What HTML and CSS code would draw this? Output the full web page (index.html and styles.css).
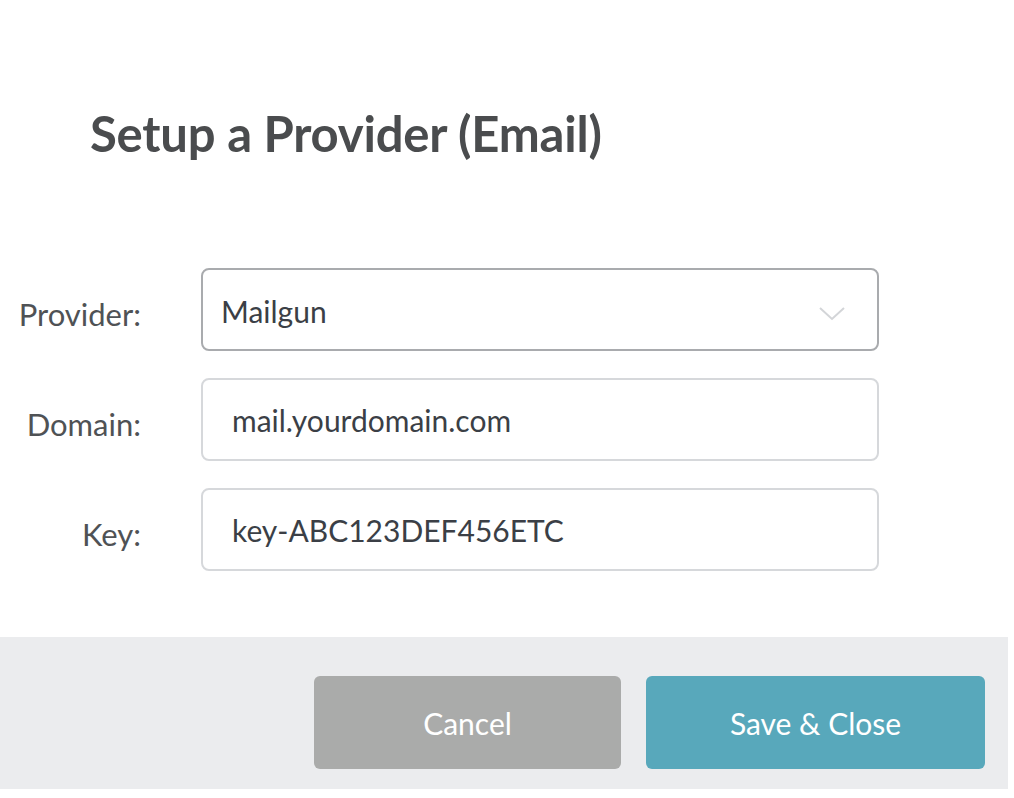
FILE: index.html
```html
<!DOCTYPE html>
<html lang="en">
  <head>
    <meta name="viewport" content="width=device-width" />
    <title>Setup a Provider (Email)</title>
    <link rel="stylesheet" href="styles.css">
  </head>
  <body>
    <main class="dialog">
      <h1 class="dialog-title">Setup a Provider (Email)</h1>
      <form class="provider-form">
        <label class="field-label" for="provider">Provider:</label>
        <div class="select-box" id="provider">
          <span class="select-value">Mailgun</span>
          <svg class="chevron" width="26" height="14" viewBox="0 0 26 14">
            <path d="M1 1 L13 12 L25 1" fill="none" stroke="#d3d5d8" stroke-width="2"/>
          </svg>
        </div>
        <label class="field-label" for="domain">Domain:</label>
        <input class="text-input" id="domain" type="text" value="mail.yourdomain.com">
        <label class="field-label" for="key">Key:</label>
        <input class="text-input" id="key" type="text" value="key-ABC123DEF456ETC">
      </form>
      <footer class="dialog-footer">
        <button class="btn btn-cancel" type="button">Cancel</button>
        <button class="btn btn-save" type="button">Save &amp; Close</button>
      </footer>
    </main>
  </body>
</html>
```

FILE: styles.css
```css
body {
  margin: 0;
  background: #fff;
  font-family: Lato, "Open Sans", sans-serif;
}

.dialog {
  width: 1008px;
  padding-top: 101px;
}

.dialog-title {
  margin: 0 0 0 90px;
  font-size: 49px;
  line-height: 64px;
  font-weight: 700;
  letter-spacing: -0.2px;
  color: #4a4c4e;
}

/* label column + input column */
.provider-form {
  display: grid;
  grid-template-columns: 141px 678px;
  column-gap: 60px;
  row-gap: 27px;
  align-items: center;
  margin-top: 103px;
}

.field-label {
  padding-top: 9px;
  text-align: right;
  font-size: 31px;
  color: #4f5255;
}

.select-box,
.text-input {
  box-sizing: border-box;
  height: 83px;
  border: 2px solid #d6d8db;
  border-radius: 8px;
  background: #fff;
  font-family: inherit;
  font-size: 30px;
  color: #3b3f46;
}

.select-box {
  display: flex;
  align-items: center;
  justify-content: space-between;
  padding: 0 32px 0 18px;
  border-color: #a9abae;
}

.select-value {
  margin-top: 3px;
}

.chevron {
  margin-top: 8px;
}

.text-input {
  width: 100%;
  padding: 0 29px;
  outline: none;
}

.dialog-footer {
  display: flex;
  justify-content: flex-end;
  gap: 25px;
  margin-top: 66px;
  padding: 39px 23px 20px 0;
  height: 152px;
  box-sizing: border-box;
  background: #ebecee;
}

.btn {
  height: 93px;
  border: none;
  border-radius: 6px;
  color: #fff;
  font-family: inherit;
  font-size: 30px;
}

.btn-cancel {
  width: 307px;
  background: #aaabaa;
}

.btn-save {
  width: 339px;
  background: #58a8bb;
}
```
